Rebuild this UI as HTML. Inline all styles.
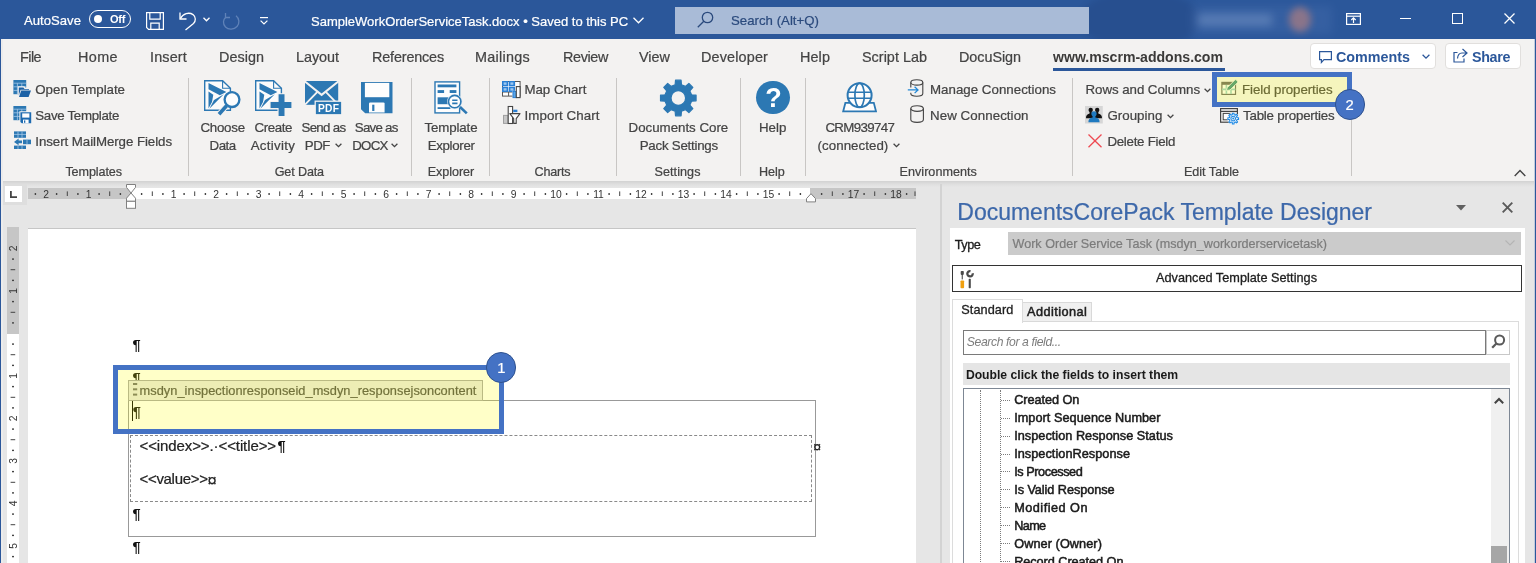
<!DOCTYPE html>
<html lang="en">
<head>
<meta charset="utf-8">
<title>Word - DocumentsCorePack Template Designer</title>
<style>
*{box-sizing:border-box;margin:0;padding:0}
html,body{width:1536px;height:563px;overflow:hidden;background:#e6e6e6}
body{font-family:"Liberation Sans",sans-serif;color:#444;position:relative}
#app{will-change:transform;position:absolute;left:0;top:0;width:1536px;height:563px;overflow:hidden;background:#e6e6e6}
.abs{position:absolute}
.t{position:absolute;white-space:nowrap;line-height:1;color:#444;-webkit-text-stroke-width:0.22px}
svg{position:absolute;overflow:visible}
#titlebar{position:absolute;left:0;top:0;width:1536px;height:39px;background:#2b579a}
#titlebar .t{color:#fff}
#ribbon{position:absolute;left:1px;top:39px;width:1534px;height:142px;background:#f3f2f1}
.sep{position:absolute;top:78px;width:1px;height:98px;background:#c8c6c4}
</style>
</head>
<body>
<div id="app">
<!-- ================= TITLE BAR ================= -->
<div id="titlebar">
<span class="t" style="left:24.0px;top:13.9px;font-size:13.1px;letter-spacing:0.027px;">AutoSave</span>
<div class="abs" style="left:89px;top:10px;width:42px;height:18px;border:1.3px solid #fff;border-radius:9px"></div>
<div class="abs" style="left:93.5px;top:15px;width:8px;height:8px;border-radius:50%;background:#fff"></div>
<span class="t" style="left:110.0px;top:14.0px;font-size:11px;letter-spacing:-0.297px;font-weight:700;-webkit-text-stroke-width:0;">Off</span>
<svg style="left:146px;top:12px" width="18" height="18" viewBox="0 0 18 18" fill="none" stroke="#fff" stroke-width="1.2"><path d="M0.6 0.6H17.4V17.4H2.6L0.6 15.4Z"/><path d="M3.8 0.6V7.2H14.2V0.6"/><path d="M4.8 17.4V11.2H13.2V17.4"/></svg>
<svg style="left:179px;top:11px" width="18" height="20" viewBox="0 0 18 20" fill="none" stroke="#fff" stroke-width="1.3"><path d="M1 1.5V8H7.5"/><path d="M1.3 7.6C4 2.5 10 0.8 14 3.6C17 6 17 10 14.5 12.5L6.5 19"/></svg>
<svg style="left:202.5px;top:17px" width="7" height="5" viewBox="0 0 7 5" fill="none" stroke="#fff" stroke-width="1.3"><path d="M0.5 0.8L3.5 3.8L6.5 0.8"/></svg>
<svg style="left:222px;top:12px" width="18" height="18" viewBox="0 0 18 18" fill="none" stroke="#5f82b8" stroke-width="1.3"><path d="M3.5 1V5.5H8"/><path d="M3.8 5.2C1 7.5 0.5 12 3.5 15C6.5 18 12 17.8 15 14.5C17.8 11.5 17.5 6.5 14 3.8"/></svg>
<svg style="left:259.5px;top:16.5px" width="8" height="8" viewBox="0 0 8 8" fill="none" stroke="#fff" stroke-width="1.2"><path d="M0 0.6H8"/><path d="M0.6 3.6L4 7L7.4 3.6"/></svg>
<span class="t" style="left:311.0px;top:14.7px;font-size:13px;">SampleWorkOrderServiceTask.docx • Saved to this PC</span>
<svg style="left:633px;top:17px" width="11" height="7" viewBox="0 0 11 7" fill="none" stroke="#fff" stroke-width="1.3"><path d="M0.5 0.8L5.5 5.8L10.5 0.8"/></svg>
<div class="abs" style="left:1080px;top:-10px;width:120px;height:60px;border-radius:50%;background:rgba(0,0,40,.085);filter:blur(3px)"></div>
<div class="abs" style="left:675px;top:7px;width:414px;height:26.5px;background:#a9bbd7"></div>
<svg style="left:697px;top:11px" width="17" height="17" viewBox="0 0 17 17" fill="none" stroke="#2b4a7d" stroke-width="1.3"><circle cx="10.5" cy="6.5" r="5.2"/><path d="M6.8 10.2L0.8 16.2"/></svg>
<span class="t" style="left:731.0px;top:13.5px;font-size:13.2px;letter-spacing:0.029px;color:#2b4a7d;">Search (Alt+Q)</span>
<div class="abs" style="left:1192px;top:6px;width:140px;height:28px;background:#4a70b0;filter:blur(5px);opacity:.35"></div>
<div class="abs" style="left:1198px;top:14px;width:74px;height:12px;background:#6f8fc2;filter:blur(4px);opacity:.6"></div>
<div class="abs" style="left:1289px;top:7px;width:22px;height:25px;border-radius:50%;background:#a07a84;filter:blur(3.5px);opacity:.8"></div>
<svg style="left:1346px;top:13px" width="15" height="12" viewBox="0 0 15 12" fill="none" stroke="#fff" stroke-width="1.2"><rect x="0.6" y="0.6" width="13.8" height="10.8"/><path d="M0.6 3.2H14.4"/><path d="M7.5 10V5M5.3 7L7.5 4.9L9.7 7"/></svg>
<div class="abs" style="left:1400px;top:18px;width:11px;height:1.3px;background:#fff"></div>
<div class="abs" style="left:1452px;top:13px;width:11px;height:11px;border:1.3px solid #fff"></div>
<svg style="left:1504px;top:13px" width="11" height="11" viewBox="0 0 11 11" fill="none" stroke="#fff" stroke-width="1.3"><path d="M0.5 0.5L10.5 10.5M10.5 0.5L0.5 10.5"/></svg>
</div>
<!-- ================= RIBBON ================= -->
<div id="ribbon"></div>
<div class="abs" style="left:1px;top:181px;width:1534px;height:6px;background:linear-gradient(#d2d2d2,#dedede 50%,#e6e6e6)"></div>
<span class="t" style="left:20.0px;top:50.0px;font-size:14.4px;letter-spacing:-0.551px;">File</span>
<span class="t" style="left:78.0px;top:50.0px;font-size:14.4px;letter-spacing:0.402px;">Home</span>
<span class="t" style="left:150.0px;top:50.0px;font-size:14.4px;letter-spacing:0.167px;">Insert</span>
<span class="t" style="left:219.0px;top:50.0px;font-size:14.4px;letter-spacing:0.034px;">Design</span>
<span class="t" style="left:296.0px;top:50.0px;font-size:14.4px;letter-spacing:-0.036px;">Layout</span>
<span class="t" style="left:372.0px;top:50.0px;font-size:14.4px;letter-spacing:-0.159px;">References</span>
<span class="t" style="left:475.0px;top:50.0px;font-size:14.4px;letter-spacing:0.275px;">Mailings</span>
<span class="t" style="left:563.0px;top:50.0px;font-size:14.4px;letter-spacing:-0.365px;">Review</span>
<span class="t" style="left:639.0px;top:50.0px;font-size:14.4px;letter-spacing:0.016px;">View</span>
<span class="t" style="left:701.0px;top:50.0px;font-size:14.4px;letter-spacing:0.155px;">Developer</span>
<span class="t" style="left:800.0px;top:50.0px;font-size:14.4px;letter-spacing:0.098px;">Help</span>
<span class="t" style="left:862.0px;top:50.0px;font-size:14.4px;letter-spacing:0.020px;">Script Lab</span>
<span class="t" style="left:959.0px;top:50.0px;font-size:14.4px;letter-spacing:-0.051px;">DocuSign</span>
<span class="t" style="left:1053.0px;top:50.3px;font-size:14.1px;letter-spacing:-0.011px;font-weight:700;color:#3b3a39;-webkit-text-stroke-width:0;">www.mscrm-addons.com</span>
<div class="abs" style="left:1053px;top:68px;width:172px;height:3px;background:#2b579a"></div>
<div class="abs" style="left:1310px;top:43px;width:126px;height:26px;background:#fff;border:1px solid #e1dfdd;border-radius:4px"></div>
<svg style="left:1319px;top:50.5px" width="13" height="13" viewBox="0 0 13 13" fill="none" stroke="#2b579a" stroke-width="1.2"><path d="M0.6 0.6H12.4V8.6H5L2.4 11.4V8.6H0.6Z"/></svg>
<span class="t" style="left:1336.0px;top:50.1px;font-size:14.3px;letter-spacing:0.014px;font-weight:700;color:#2b579a;-webkit-text-stroke-width:0;">Comments</span>
<svg style="left:1422px;top:53.5px" width="8" height="6" viewBox="0 0 8 6" fill="none" stroke="#2b579a" stroke-width="1.3"><path d="M0.6 0.8L4 4.2L7.4 0.8"/></svg>
<div class="abs" style="left:1445px;top:43px;width:76px;height:26px;background:#fff;border:1px solid #e1dfdd;border-radius:4px"></div>
<svg style="left:1453px;top:48px" width="15" height="15" viewBox="0 0 15 15" fill="none" stroke="#2b579a" stroke-width="1.2"><path d="M4.5 4.5H1V14H11V10.5"/><path d="M9.5 1L14 5L9.5 9M14 5H9C6.5 5 4.8 6.8 4.5 10.5"/></svg>
<span class="t" style="left:1472.0px;top:50.1px;font-size:14.3px;letter-spacing:-0.350px;font-weight:700;color:#2b579a;-webkit-text-stroke-width:0;">Share</span>
<div class="sep" style="left:188px"></div>
<div class="sep" style="left:411px"></div>
<div class="sep" style="left:489px"></div>
<div class="sep" style="left:616px"></div>
<div class="sep" style="left:740px"></div>
<div class="sep" style="left:805px"></div>
<div class="sep" style="left:1072px"></div>
<div class="sep" style="left:1351px"></div>
<svg style="left:13px;top:79px" width="18" height="18" viewBox="0 0 18 18"><rect x="0.4" y="1" width="12.8" height="14.2" fill="#2c78b3"/><path d="M0.4 4.2H13.2M0.4 7.8H13.2M0.4 11.4H13.2M4.4 4.2V15.2M8.8 4.2V15.2" stroke="#a4c8e8" stroke-width="0.8" fill="none"/><path d="M4.6 18.8L7.4 10.6H19L16.2 18.8Z" fill="#f3f2f1"/><path d="M5.6 8H11L12 9.4H16.6V11H8L5.6 17.6Z" fill="#f3f2f1" stroke="#f3f2f1" stroke-width="1.6"/><path d="M6 18L8.2 11.6H18L15.6 18Z" fill="#1d62a6"/><path d="M5.8 16.6V8.6H10.4L11.6 10H16V10.8H7.6Z" fill="#1d62a6"/></svg>
<span class="t" style="left:35.3px;top:83.1px;font-size:13.3px;letter-spacing:-0.018px;">Open Template</span>
<svg style="left:13px;top:105px" width="18" height="18" viewBox="0 0 18 18"><rect x="0.4" y="1" width="12.8" height="14.2" fill="#2c78b3"/><path d="M0.4 4.2H13.2M0.4 7.8H13.2M0.4 11.4H13.2M4.4 4.2V15.2M8.8 4.2V15.2" stroke="#a4c8e8" stroke-width="0.8" fill="none"/><path d="M6.4 6.2H19V19.2H8.2L6.4 17.4Z" fill="#f3f2f1"/><path d="M7.4 7.2H18.2V18.3H8.8L7.4 16.9Z" fill="#1d6ab0"/><rect x="9.2" y="8.4" width="7.2" height="4.2" fill="#fdfdfd"/><rect x="10" y="14.6" width="5.6" height="3.7" fill="#fdfdfd"/><rect x="11" y="15.4" width="1.3" height="2.4" fill="#1d6ab0"/></svg>
<span class="t" style="left:35.3px;top:109.3px;font-size:13.3px;letter-spacing:-0.309px;">Save Template</span>
<svg style="left:13px;top:131px" width="18" height="18" viewBox="0 0 18 18"><g fill="#2c78b3"><rect x="1" y="0.4" width="12" height="6.4"/><rect x="10" y="8.6" width="8" height="4.6"/><path d="M1 10.9L5.6 7.6V9.6H9V12.2H5.6V14.2Z"/><rect x="1" y="14.6" width="12" height="3.4"/></g><path d="M1 3.4H13M5 0.4V6.8M9 0.4V6.8M5 14.6V18M9 14.6V18M14 8.6V13.2" stroke="#a4c8e8" stroke-width="0.8" fill="none"/></svg>
<span class="t" style="left:35.3px;top:135.4px;font-size:13.3px;letter-spacing:-0.065px;">Insert MailMerge Fields</span>
<span class="t" style="left:65.4px;top:166.2px;font-size:12.6px;letter-spacing:-0.090px;">Templates</span>
<svg style="left:204px;top:79.5px" width="37" height="36" viewBox="0 0 37 36"><path d="M0.7 0.7H18.6L26.4 8.2V30.2H0.7Z" fill="#fbfbfb" stroke="#2c78b3" stroke-width="1.4"/><path d="M18.6 0.7V8.2H26.4" fill="none" stroke="#2c78b3" stroke-width="1.1"/><path d="M4.5 3.1L22.4 12.1L15.8 15.2L4.5 9.2Z M4.5 11.6L9.3 14.8L8 21.9L4.5 28.4Z M19.8 14.2L5.4 28.8L10 20Z" fill="#2c78b3"/><path d="M22.8 25.6L14.6 34.6" stroke="#f3f2f1" stroke-width="5.6" fill="none"/><path d="M22.6 25.8L15 34.2" stroke="#2c78b3" stroke-width="3.6" fill="none"/><circle cx="28" cy="19.6" r="7.4" fill="#fdfdfd" stroke="#2c78b3" stroke-width="2.3"/></svg>
<span class="t" style="left:200.5px;top:120.9px;font-size:13.3px;letter-spacing:-0.257px;">Choose</span>
<span class="t" style="left:209.6px;top:139.4px;font-size:13.3px;letter-spacing:-0.523px;">Data</span>
<svg style="left:254.5px;top:79.5px" width="37" height="36" viewBox="0 0 37 36"><path d="M0.7 0.7H18.6L26.4 8.2V30.2H0.7Z" fill="#fbfbfb" stroke="#2c78b3" stroke-width="1.4"/><path d="M18.6 0.7V8.2H26.4" fill="none" stroke="#2c78b3" stroke-width="1.1"/><path d="M4.5 3.1L22.4 12.1L15.8 15.2L4.5 9.2Z M4.5 11.6L9.3 14.8L8 21.9L4.5 28.4Z M19.8 14.2L5.4 28.8L10 20Z" fill="#2c78b3"/><path d="M22.5 13.2H30.5V21H37.4V29H30.5V37H22.5V29H14.6V21H22.5Z" fill="#f3f2f1"/><path d="M23.6 14.2H29.5V22H36.4V28H29.5V36H23.6V28H15.6V22H23.6Z" fill="#2c78b3"/></svg>
<span class="t" style="left:254.6px;top:120.9px;font-size:13.3px;letter-spacing:-0.420px;">Create</span>
<span class="t" style="left:250.7px;top:139.4px;font-size:13.3px;letter-spacing:0.297px;">Activity</span>
<svg style="left:305.4px;top:80.8px" width="37" height="34" viewBox="0 0 37 34"><rect x="0" y="0" width="33.2" height="23.8" fill="#2c78b3"/><path d="M-0.4 0.2L16.6 13.8L33.6 0.2" fill="none" stroke="#f3f2f1" stroke-width="2.1"/><path d="M0 23.6L12.4 10.8M33.2 23.6L20.8 10.8" fill="none" stroke="#f3f2f1" stroke-width="1.9"/><rect x="10.2" y="20.2" width="26.6" height="13.6" fill="#2c78b3" stroke="#f3f2f1" stroke-width="1.3"/><text x="23.6" y="30.8" font-family="Liberation Sans, sans-serif" font-size="10.2" font-weight="700" fill="#fff" text-anchor="middle" letter-spacing="0.3">PDF</text></svg>
<span class="t" style="left:301.5px;top:120.9px;font-size:13.3px;letter-spacing:-0.700px;">Send as</span>
<span class="t" style="left:304.8px;top:139.4px;font-size:13.3px;letter-spacing:-0.536px;">PDF</span>
<svg style="left:335px;top:143px" width="7" height="5" viewBox="0 0 7 5" fill="none" stroke="#444" stroke-width="1.3"><path d="M0.6 0.8L3.5 3.7L6.4 0.8"/></svg>
<svg style="left:360.7px;top:81.8px" width="32" height="32" viewBox="0 0 32 32"><path d="M0 0H31.5V31.3H4.2L0 27.2Z" fill="#2c78b3"/><rect x="3.9" y="0.9" width="24.4" height="14.3" fill="#fdfdfd"/><path d="M8 30.4V21.6A1.2 1.2 0 0 1 9.2 20.4H22.4A1.2 1.2 0 0 1 23.6 21.6V30.4Z" fill="#fdfdfd"/><rect x="11.2" y="22.7" width="2.2" height="6.3" fill="#2c78b3"/></svg>
<span class="t" style="left:354.8px;top:120.9px;font-size:13.3px;letter-spacing:-0.750px;">Save as</span>
<span class="t" style="left:352.3px;top:139.4px;font-size:13.3px;letter-spacing:-0.805px;">DOCX</span>
<svg style="left:391.3px;top:143px" width="7" height="5" viewBox="0 0 7 5" fill="none" stroke="#444" stroke-width="1.3"><path d="M0.6 0.8L3.5 3.7L6.4 0.8"/></svg>
<span class="t" style="left:274.7px;top:166.2px;font-size:12.6px;letter-spacing:-0.138px;">Get Data</span>
<svg style="left:433.6px;top:80.8px" width="34" height="33" viewBox="0 0 34 33"><rect x="1" y="0.9" width="24.6" height="31" fill="#fdfdfd" stroke="#2c78b3" stroke-width="1.4"/><g fill="#2c78b3"><rect x="3.6" y="3.5" width="18.8" height="2.8"/><rect x="3.6" y="9.1" width="6.5" height="2.9"/><rect x="15.7" y="9.1" width="6.7" height="2.9"/><rect x="3.6" y="16.3" width="11" height="6.9"/><rect x="3.6" y="26.2" width="12.8" height="1.8"/></g><path d="M25 25L32.8 32.4" stroke="#2c78b3" stroke-width="2.6"/><circle cx="20.7" cy="20.6" r="7.6" fill="#d9e6f2"/><circle cx="20.7" cy="20.6" r="6.2" fill="#fdfdfd" stroke="#2c78b3" stroke-width="1.6"/><path d="M18.2 19.3H23.5M18.2 22.4H23.5" stroke="#2c78b3" stroke-width="1.6"/></svg>
<span class="t" style="left:424.4px;top:120.9px;font-size:13.3px;letter-spacing:-0.109px;">Template</span>
<span class="t" style="left:427.7px;top:139.4px;font-size:13.3px;letter-spacing:-0.327px;">Explorer</span>
<span class="t" style="left:427.7px;top:166.2px;font-size:12.6px;letter-spacing:-0.051px;">Explorer</span>
<svg style="left:501.9px;top:80.8px" width="19" height="17" viewBox="0 0 19 17"><rect x="0.5" y="0.5" width="17.6" height="14.6" fill="#fdfdfd" stroke="#555" stroke-width="1"/><path d="M0.5 11H13M6.6 11V15M12.6 0.5V5" stroke="#555" fill="none"/><g fill="#2a7fd4"><rect x="0" y="0" width="6.2" height="5.2"/><rect x="6.8" y="0" width="6.2" height="5.2"/><rect x="0" y="5.8" width="6.2" height="5.2"/><rect x="6.8" y="5.8" width="6.2" height="5.2"/></g><g fill="#9cc7f0"><rect x="1.6" y="1.4" width="3" height="2.4"/><rect x="8.4" y="1.4" width="3" height="2.4"/><rect x="1.6" y="7.2" width="3" height="2.4"/><rect x="8.4" y="7.2" width="3" height="2.4"/></g><rect x="10.4" y="9.8" width="4" height="7" fill="#f3f2f1"/><rect x="11" y="10.4" width="3.2" height="6.2" fill="#5aa7ea" stroke="#2a7fd4" stroke-width="1"/><rect x="14.3" y="5.6" width="3.8" height="11" fill="#fdfdfd" stroke="#444" stroke-width="1.1"/></svg>
<span class="t" style="left:524.4px;top:83.1px;font-size:13.3px;">Map Chart</span>
<svg style="left:503.3px;top:105.6px" width="18" height="18" viewBox="0 0 18 18"><rect x="0.5" y="9.4" width="4.4" height="8" fill="#c8c8c8" stroke="#a0a0a0"/><rect x="5.2" y="0.5" width="4.4" height="17" fill="#fdfdfd" stroke="#444" stroke-width="1.1"/><rect x="10.2" y="3.7" width="4.2" height="2.4" fill="#2a7fd4"/><path d="M6.8 7.6H17L13.2 12.6V17.4H10.7V12.6Z" fill="#fdfdfd" stroke="#444" stroke-width="1.1" stroke-linejoin="round"/></svg>
<span class="t" style="left:524.4px;top:109.3px;font-size:13.3px;letter-spacing:0.108px;">Import Chart</span>
<span class="t" style="left:534.6px;top:166.2px;font-size:12.6px;letter-spacing:-0.232px;">Charts</span>
<svg style="left:660.4px;top:79.6px" width="37" height="36" viewBox="0 0 37 36"><path d="M15.13 4.77 L15.52 0.22 L21.08 0.22 L21.47 4.77 L25.41 6.41 L28.91 3.46 L32.84 7.39 L29.89 10.89 L31.53 14.83 L36.08 15.22 L36.08 20.78 L31.53 21.17 L29.89 25.11 L32.84 28.61 L28.91 32.54 L25.41 29.59 L21.47 31.23 L21.08 35.78 L15.52 35.78 L15.13 31.23 L11.19 29.59 L7.69 32.54 L3.76 28.61 L6.71 25.11 L5.07 21.17 L0.52 20.78 L0.52 15.22 L5.07 14.83 L6.71 10.89 L3.76 7.39 L7.69 3.46 L11.19 6.41Z M11.00 18.00 a7.3 7.3 0 1 0 14.6 0 a7.3 7.3 0 1 0 -14.6 0Z" fill="#2c78b3" fill-rule="evenodd" stroke="#2c78b3" stroke-width="1.2" stroke-linejoin="round"/></svg>
<span class="t" style="left:628.6px;top:120.9px;font-size:13.3px;letter-spacing:-0.012px;">Documents Core</span>
<span class="t" style="left:639.7px;top:139.4px;font-size:13.3px;letter-spacing:-0.239px;">Pack Settings</span>
<span class="t" style="left:654.5px;top:166.2px;font-size:12.6px;letter-spacing:0.061px;">Settings</span>
<div class="abs" style="left:756.2px;top:80.6px;width:33.6px;height:33.6px;border-radius:50%;background:#2c78b3"></div>
<span class="t" style="left:765.3px;top:85.0px;font-size:27px;font-weight:700;color:#fff;-webkit-text-stroke-width:0;">?</span>
<span class="t" style="left:758.9px;top:120.9px;font-size:13.3px;letter-spacing:0.035px;">Help</span>
<span class="t" style="left:758.9px;top:166.2px;font-size:12.6px;letter-spacing:0.023px;">Help</span>
<svg style="left:842px;top:82px" width="35" height="31" viewBox="0 0 35 31" fill="none" stroke="#2c78b3" stroke-width="1.8"><path d="M3.4 20.8L1.2 29.4H34L31.8 20.8Z" fill="#fdfdfd"/><circle cx="17.6" cy="13.2" r="12" fill="#fdfdfd" stroke-width="2"/><ellipse cx="17.6" cy="13.2" rx="4.7" ry="12" stroke-width="1.7"/><path d="M6.2 10.2H29M6.2 16.2H29" stroke-width="1.6"/></svg>
<span class="t" style="left:825.4px;top:120.9px;font-size:13.3px;letter-spacing:-0.651px;">CRM939747</span>
<span class="t" style="left:817.6px;top:139.4px;font-size:13.3px;letter-spacing:0.044px;">(connected)</span>
<svg style="left:893px;top:143px" width="7" height="5" viewBox="0 0 7 5" fill="none" stroke="#444" stroke-width="1.3"><path d="M0.6 0.8L3.5 3.7L6.4 0.8"/></svg>
<svg style="left:908.4px;top:79.4px" width="16" height="18" viewBox="0 0 16 18" fill="none" stroke="#444" stroke-width="1.1"><path d="M2.8 3.4V8.6M2.8 13.8V14.6A6 2.7 0 0 0 14.8 14.6V3.4"/><ellipse cx="8.8" cy="3.4" rx="6" ry="2.7"/><path d="M-0.2 10.9H9.8M6.6 7.7L10 10.9L6.6 14.1" stroke="#2388d6" stroke-width="1.3"/></svg>
<span class="t" style="left:930.0px;top:83.1px;font-size:13.3px;letter-spacing:0.018px;">Manage Connections</span>
<svg style="left:909.6px;top:105.4px" width="15" height="18" viewBox="0 0 15 18" fill="none" stroke="#444" stroke-width="1.1"><path d="M0.8 3.6V14.6A6.3 2.8 0 0 0 13.4 14.6V3.6"/><ellipse cx="7.1" cy="3.6" rx="6.3" ry="2.8"/></svg>
<span class="t" style="left:930.0px;top:109.3px;font-size:13.3px;letter-spacing:0.073px;">New Connection</span>
<span class="t" style="left:899.6px;top:166.2px;font-size:12.6px;letter-spacing:0.017px;">Environments</span>
<span class="t" style="left:1085.5px;top:83.1px;font-size:13.3px;letter-spacing:-0.050px;">Rows and Columns</span>
<svg style="left:1204px;top:87.5px" width="7" height="5" viewBox="0 0 7 5" fill="none" stroke="#444" stroke-width="1.3"><path d="M0.6 0.8L3.5 3.7L6.4 0.8"/></svg>
<svg style="left:1085.4px;top:105.6px" width="18" height="18" viewBox="0 0 18 18"><rect width="17.8" height="17.5" fill="#d6d6d6"/><g fill="#111"><circle cx="5.7" cy="3.9" r="2.2"/><circle cx="12.2" cy="3.9" r="2.2"/><path d="M4.6 5.6H6.8V7.6C8.4 8 8.6 9 8.9 9.6C9.2 9 9.4 8 11.1 7.6V5.6H13.3V7.6C16.2 8.4 17 10 17 12.2H1C1 10 1.8 8.4 4.6 7.6Z"/></g><g fill="#1f7ac0"><circle cx="9" cy="7.8" r="2.6"/><path d="M7.6 9.6H10.4V11.6C13.4 12.2 14.6 13.6 14.6 16.2H3.4C3.4 13.6 4.6 12.2 7.6 11.6Z"/></g></svg>
<span class="t" style="left:1107.4px;top:109.3px;font-size:13.3px;letter-spacing:0.037px;">Grouping</span>
<svg style="left:1166.6px;top:114px" width="7" height="5" viewBox="0 0 7 5" fill="none" stroke="#444" stroke-width="1.3"><path d="M0.6 0.8L3.5 3.7L6.4 0.8"/></svg>
<svg style="left:1087.6px;top:133.8px" width="14" height="14" viewBox="0 0 14 14" fill="none" stroke="#ee4a52" stroke-width="1.3"><path d="M0.5 0.5L13.5 13.2M13.5 0.5L0.5 13.2"/></svg>
<span class="t" style="left:1107.4px;top:135.4px;font-size:13.3px;letter-spacing:-0.263px;">Delete Field</span>
<svg style="left:1221px;top:79.4px" width="18" height="17" viewBox="0 0 18 17"><rect x="0.9" y="3.4" width="13.6" height="12" fill="#fdfdfd" stroke="#666" stroke-width="1.2"/><rect x="0.9" y="3.4" width="13.6" height="2.4" fill="#666"/><path d="M1 10.4H14.4M5.4 6V15M10 6V15" stroke="#9ad0c8" stroke-width="1.6"/><path d="M5.4 11.4L6.4 8.4L13.6 1.2A1.3 1.3 0 0 1 15.6 1.2L16.4 2A1.3 1.3 0 0 1 16.4 3.8L9 11Z" fill="#3f8f86" stroke="#fdfdfd" stroke-width="0.8"/></svg>
<span class="t" style="left:1242.0px;top:83.1px;font-size:13.3px;letter-spacing:-0.072px;">Field properties</span>
<svg style="left:1220px;top:107.5px" width="19" height="17" viewBox="0 0 19 17"><rect x="0.6" y="0.6" width="16.8" height="13.6" fill="none" stroke="#444" stroke-width="1.2"/><path d="M0.6 3.4H17.4" stroke="#444" stroke-width="1.2"/><rect x="3.2" y="5.4" width="12" height="6.4" fill="#fdfdfd" stroke="#444" stroke-width="1"/><circle cx="13.2" cy="10.6" r="6" fill="#f3f2f1"/><path d="M12.29 6.81 L12.37 5.26 L14.03 5.26 L14.11 6.81 L15.24 7.28 L16.38 6.24 L17.56 7.42 L16.52 8.56 L16.99 9.69 L18.54 9.77 L18.54 11.43 L16.99 11.51 L16.52 12.64 L17.56 13.78 L16.38 14.96 L15.24 13.92 L14.11 14.39 L14.03 15.94 L12.37 15.94 L12.29 14.39 L11.16 13.92 L10.02 14.96 L8.84 13.78 L9.88 12.64 L9.41 11.51 L7.86 11.43 L7.86 9.77 L9.41 9.69 L9.88 8.56 L8.84 7.42 L10.02 6.24 L11.16 7.28Z M10.90 10.60 a2.3 2.3 0 1 0 4.6 0 a2.3 2.3 0 1 0 -4.6 0Z" fill="#fdfdfd" fill-rule="evenodd" stroke="#1e8ae6" stroke-width="1.1" stroke-linejoin="round"/><circle cx="13.2" cy="10.6" r="1" fill="#1e8ae6"/></svg>
<span class="t" style="left:1243.0px;top:109.3px;font-size:13.3px;letter-spacing:-0.195px;">Table properties</span>
<span class="t" style="left:1183.9px;top:166.2px;font-size:12.6px;">Edit Table</span>
<div class="abs" style="left:1212px;top:72px;width:140px;height:35px;border:5px solid #4472c4;background:rgba(255,255,0,.215)"></div>
<div class="abs" style="left:1334.6px;top:89.4px;width:30.6px;height:30.6px;border-radius:50%;background:#4472c4;border:1.5px solid #2f528f"></div>
<span class="t" style="left:1345.6px;top:97.5px;font-size:14.8px;color:#fff;">2</span>
<svg style="left:1514px;top:169px" width="12" height="8" viewBox="0 0 12 8" fill="none" stroke="#444" stroke-width="1.4"><path d="M0.7 7L6 1.5L11.3 7"/></svg>
<!-- ================= DOCUMENT AREA ================= -->
<div class="abs" style="left:3px;top:184px;width:24px;height:21px;background:#dedede"></div>
<div class="abs" style="left:5px;top:186px;width:17px;height:16px;background:#fff"></div>
<svg style="left:10px;top:191px" width="7" height="7" viewBox="0 0 7 7" fill="none" stroke="#444" stroke-width="1.8"><path d="M0.9 0V6.1H7"/></svg>
<div class="abs" style="left:28px;top:188px;width:888px;height:11px;background:#fff"></div>
<div class="abs" style="left:28px;top:188px;width:103px;height:11px;background:#c6c6c6"></div>
<div class="abs" style="left:810px;top:188px;width:106px;height:11px;background:#c6c6c6"></div>
<svg style="left:0;top:188px" width="920" height="11" viewBox="0 0 920 11" fill="#444"><rect x="34.7" y="5" width="1.4" height="2"/><text x="46.0" y="9.6" font-family="Liberation Sans, sans-serif" font-size="10.3" text-anchor="middle" fill="#333">2</text><rect x="55.9" y="5" width="1.4" height="2"/><rect x="66.8" y="3.4" width="1" height="4.6"/><rect x="77.2" y="5" width="1.4" height="2"/><text x="88.5" y="9.6" font-family="Liberation Sans, sans-serif" font-size="10.3" text-anchor="middle" fill="#333">1</text><rect x="98.4" y="5" width="1.4" height="2"/><rect x="109.2" y="3.4" width="1" height="4.6"/><rect x="119.7" y="5" width="1.4" height="2"/><rect x="140.9" y="5" width="1.4" height="2"/><rect x="151.8" y="3.4" width="1" height="4.6"/><rect x="162.2" y="5" width="1.4" height="2"/><text x="173.5" y="9.6" font-family="Liberation Sans, sans-serif" font-size="10.3" text-anchor="middle" fill="#333">1</text><rect x="183.4" y="5" width="1.4" height="2"/><rect x="194.2" y="3.4" width="1" height="4.6"/><rect x="204.7" y="5" width="1.4" height="2"/><text x="216.0" y="9.6" font-family="Liberation Sans, sans-serif" font-size="10.3" text-anchor="middle" fill="#333">2</text><rect x="225.9" y="5" width="1.4" height="2"/><rect x="236.8" y="3.4" width="1" height="4.6"/><rect x="247.2" y="5" width="1.4" height="2"/><text x="258.5" y="9.6" font-family="Liberation Sans, sans-serif" font-size="10.3" text-anchor="middle" fill="#333">3</text><rect x="268.4" y="5" width="1.4" height="2"/><rect x="279.2" y="3.4" width="1" height="4.6"/><rect x="289.7" y="5" width="1.4" height="2"/><text x="301.0" y="9.6" font-family="Liberation Sans, sans-serif" font-size="10.3" text-anchor="middle" fill="#333">4</text><rect x="310.9" y="5" width="1.4" height="2"/><rect x="321.8" y="3.4" width="1" height="4.6"/><rect x="332.2" y="5" width="1.4" height="2"/><text x="343.5" y="9.6" font-family="Liberation Sans, sans-serif" font-size="10.3" text-anchor="middle" fill="#333">5</text><rect x="353.4" y="5" width="1.4" height="2"/><rect x="364.2" y="3.4" width="1" height="4.6"/><rect x="374.7" y="5" width="1.4" height="2"/><text x="386.0" y="9.6" font-family="Liberation Sans, sans-serif" font-size="10.3" text-anchor="middle" fill="#333">6</text><rect x="395.9" y="5" width="1.4" height="2"/><rect x="406.8" y="3.4" width="1" height="4.6"/><rect x="417.2" y="5" width="1.4" height="2"/><text x="428.5" y="9.6" font-family="Liberation Sans, sans-serif" font-size="10.3" text-anchor="middle" fill="#333">7</text><rect x="438.4" y="5" width="1.4" height="2"/><rect x="449.2" y="3.4" width="1" height="4.6"/><rect x="459.7" y="5" width="1.4" height="2"/><text x="471.0" y="9.6" font-family="Liberation Sans, sans-serif" font-size="10.3" text-anchor="middle" fill="#333">8</text><rect x="480.9" y="5" width="1.4" height="2"/><rect x="491.8" y="3.4" width="1" height="4.6"/><rect x="502.2" y="5" width="1.4" height="2"/><text x="513.5" y="9.6" font-family="Liberation Sans, sans-serif" font-size="10.3" text-anchor="middle" fill="#333">9</text><rect x="523.4" y="5" width="1.4" height="2"/><rect x="534.2" y="3.4" width="1" height="4.6"/><rect x="544.7" y="5" width="1.4" height="2"/><text x="556.0" y="9.6" font-family="Liberation Sans, sans-serif" font-size="10.3" text-anchor="middle" fill="#333">10</text><rect x="565.9" y="5" width="1.4" height="2"/><rect x="576.8" y="3.4" width="1" height="4.6"/><rect x="587.2" y="5" width="1.4" height="2"/><text x="598.5" y="9.6" font-family="Liberation Sans, sans-serif" font-size="10.3" text-anchor="middle" fill="#333">11</text><rect x="608.4" y="5" width="1.4" height="2"/><rect x="619.2" y="3.4" width="1" height="4.6"/><rect x="629.7" y="5" width="1.4" height="2"/><text x="641.0" y="9.6" font-family="Liberation Sans, sans-serif" font-size="10.3" text-anchor="middle" fill="#333">12</text><rect x="650.9" y="5" width="1.4" height="2"/><rect x="661.8" y="3.4" width="1" height="4.6"/><rect x="672.2" y="5" width="1.4" height="2"/><text x="683.5" y="9.6" font-family="Liberation Sans, sans-serif" font-size="10.3" text-anchor="middle" fill="#333">13</text><rect x="693.4" y="5" width="1.4" height="2"/><rect x="704.2" y="3.4" width="1" height="4.6"/><rect x="714.7" y="5" width="1.4" height="2"/><text x="726.0" y="9.6" font-family="Liberation Sans, sans-serif" font-size="10.3" text-anchor="middle" fill="#333">14</text><rect x="735.9" y="5" width="1.4" height="2"/><rect x="746.8" y="3.4" width="1" height="4.6"/><rect x="757.2" y="5" width="1.4" height="2"/><text x="768.5" y="9.6" font-family="Liberation Sans, sans-serif" font-size="10.3" text-anchor="middle" fill="#333">15</text><rect x="778.4" y="5" width="1.4" height="2"/><rect x="789.2" y="3.4" width="1" height="4.6"/><rect x="799.7" y="5" width="1.4" height="2"/><rect x="820.9" y="5" width="1.4" height="2"/><rect x="831.8" y="3.4" width="1" height="4.6"/><rect x="842.2" y="5" width="1.4" height="2"/><text x="853.5" y="9.6" font-family="Liberation Sans, sans-serif" font-size="10.3" text-anchor="middle" fill="#333">17</text><rect x="863.4" y="5" width="1.4" height="2"/><rect x="874.2" y="3.4" width="1" height="4.6"/><rect x="884.7" y="5" width="1.4" height="2"/><text x="896.0" y="9.6" font-family="Liberation Sans, sans-serif" font-size="10.3" text-anchor="middle" fill="#333">18</text><rect x="905.9" y="5" width="1.4" height="2"/><rect x="914.5" y="3.4" width="1" height="4.6"/></svg>
<svg style="left:126px;top:184px" width="11" height="25" viewBox="0 0 11 25" fill="#fff" stroke="#808080" stroke-width="1"><path d="M0.5 0.5H9.5V3.4L5 9L0.5 3.4Z"/><path d="M5 9L9.5 14.2V17.3H0.5V14.2Z"/><rect x="0.5" y="17.3" width="9" height="7"/></svg>
<svg style="left:805.5px;top:192.6px" width="11" height="10" viewBox="0 0 11 10" fill="#fff" stroke="#808080" stroke-width="1"><path d="M0.5 8.9V5.6L5 0.7L9.5 5.6V8.9Z"/></svg>
<div class="abs" style="left:7px;top:227px;width:12px;height:340px;background:#fff"></div>
<div class="abs" style="left:7px;top:227px;width:12px;height:107px;background:#c6c6c6"></div>
<svg style="left:7px;top:0" width="12" height="563" viewBox="0 0 12 563" fill="#444"><text transform="translate(9.6 248.5) rotate(-90)" font-family="Liberation Sans, sans-serif" font-size="10.3" text-anchor="middle" fill="#333">2</text><rect x="5" y="258.4" width="2" height="1.4"/><rect x="3.6" y="269.2" width="4.6" height="1"/><rect x="5" y="279.7" width="2" height="1.4"/><text transform="translate(9.6 291.0) rotate(-90)" font-family="Liberation Sans, sans-serif" font-size="10.3" text-anchor="middle" fill="#333">1</text><rect x="5" y="300.9" width="2" height="1.4"/><rect x="3.6" y="311.8" width="4.6" height="1"/><rect x="5" y="322.2" width="2" height="1.4"/><rect x="5" y="343.4" width="2" height="1.4"/><rect x="3.6" y="354.2" width="4.6" height="1"/><rect x="5" y="364.7" width="2" height="1.4"/><text transform="translate(9.6 376.0) rotate(-90)" font-family="Liberation Sans, sans-serif" font-size="10.3" text-anchor="middle" fill="#333">1</text><rect x="5" y="385.9" width="2" height="1.4"/><rect x="3.6" y="396.8" width="4.6" height="1"/><rect x="5" y="407.2" width="2" height="1.4"/><text transform="translate(9.6 418.5) rotate(-90)" font-family="Liberation Sans, sans-serif" font-size="10.3" text-anchor="middle" fill="#333">2</text><rect x="5" y="428.4" width="2" height="1.4"/><rect x="3.6" y="439.2" width="4.6" height="1"/><rect x="5" y="449.7" width="2" height="1.4"/><text transform="translate(9.6 461.0) rotate(-90)" font-family="Liberation Sans, sans-serif" font-size="10.3" text-anchor="middle" fill="#333">3</text><rect x="5" y="470.9" width="2" height="1.4"/><rect x="3.6" y="481.8" width="4.6" height="1"/><rect x="5" y="492.2" width="2" height="1.4"/><text transform="translate(9.6 503.5) rotate(-90)" font-family="Liberation Sans, sans-serif" font-size="10.3" text-anchor="middle" fill="#333">4</text><rect x="5" y="513.4" width="2" height="1.4"/><rect x="3.6" y="524.2" width="4.6" height="1"/><rect x="5" y="534.7" width="2" height="1.4"/><text transform="translate(9.6 546.0) rotate(-90)" font-family="Liberation Sans, sans-serif" font-size="10.3" text-anchor="middle" fill="#333">5</text><rect x="5" y="555.9" width="2" height="1.4"/></svg>
<div class="abs" style="left:28px;top:228px;width:888px;height:340px;background:#fff;border-top:1px solid #c6c6c6"></div>
<span class="t" style="left:132.4px;top:338.3px;font-size:14.6px;font-weight:700;color:#111;-webkit-text-stroke-width:0;">¶</span>
<span class="t" style="left:132.4px;top:370.8px;font-size:14.6px;font-weight:700;color:#111;-webkit-text-stroke-width:0;">¶</span>
<div class="abs" style="left:128px;top:400px;width:688px;height:137px;border:1px solid #999"></div>
<div class="abs" style="left:130px;top:435px;width:682px;height:67px;border:1px dashed #8a8a8a"></div>
<div class="abs" style="left:128px;top:380px;width:355px;height:21px;background:#e9e9e6;border:1px solid #a8a8a8"></div>
<svg style="left:132.8px;top:383.4px" width="5" height="14" viewBox="0 0 5 14" fill="#6e6e6e"><rect x="0" y="0" width="4.2" height="2"/><rect x="0" y="5.3" width="4.2" height="2"/><rect x="0" y="10.6" width="4.2" height="2"/></svg>
<span class="t" style="left:139.6px;top:384.9px;font-size:12.8px;letter-spacing:0.033px;color:#4c4c4c;">msdyn_inspectionresponseid_msdyn_responsejsoncontent</span>
<span class="t" style="left:132.8px;top:404.6px;font-size:14.6px;font-weight:700;color:#111;-webkit-text-stroke-width:0;">¶</span>
<div class="abs" style="left:131.5px;top:401px;width:1.5px;height:20px;background:#000"></div>
<span class="t" style="left:139.5px;top:438.0px;font-size:15px;letter-spacing:-0.098px;color:#222;">&lt;&lt;index&gt;&gt;.·&lt;&lt;title&gt;&gt;</span>
<span class="t" style="left:277.6px;top:439.1px;font-size:14.6px;font-weight:700;color:#111;-webkit-text-stroke-width:0;">¶</span>
<span class="t" style="left:139.5px;top:471.4px;font-size:15px;letter-spacing:-0.312px;color:#222;">&lt;&lt;value&gt;&gt;</span>
<span class="t" style="left:207.4px;top:471.9px;font-size:16.5px;color:#222;">¤</span>
<span class="t" style="left:813.2px;top:440.3px;font-size:14px;color:#222;">¤</span>
<span class="t" style="left:132.4px;top:506.8px;font-size:14.6px;font-weight:700;color:#111;-webkit-text-stroke-width:0;">¶</span>
<span class="t" style="left:132.4px;top:540.1px;font-size:14.6px;font-weight:700;color:#111;-webkit-text-stroke-width:0;">¶</span>
<div class="abs" style="left:113px;top:365px;width:390.5px;height:69px;border:5px solid #4472c4;background:rgba(255,255,0,.215)"></div>
<div class="abs" style="left:485.8px;top:352.2px;width:30.6px;height:30.6px;border-radius:50%;background:#4472c4;border:1.5px solid #2f528f"></div>
<span class="t" style="left:497.2px;top:360.5px;font-size:14.8px;color:#fff;">1</span>
<div class="abs" style="left:940px;top:184px;width:2px;height:380px;background:#d3d3d3"></div>
<!-- ================= TASK PANE ================= -->
<span class="t" style="left:957.3px;top:200.8px;font-size:23px;letter-spacing:-0.010px;color:#3d68aa;">DocumentsCorePack Template Designer</span>
<svg style="left:1456px;top:205px" width="10" height="6" viewBox="0 0 10 6" fill="#606060"><path d="M0 0H10L5 5.6Z"/></svg>
<svg style="left:1502px;top:202px" width="11" height="11" viewBox="0 0 11 11" fill="none" stroke="#5a5a5a" stroke-width="1.9"><path d="M0.7 0.7L10.3 10.3M10.3 0.7L0.7 10.3"/></svg>
<div class="abs" style="left:949.5px;top:228px;width:575px;height:340px;background:#fff"></div>
<span class="t" style="left:954.7px;top:238.9px;font-size:12.7px;letter-spacing:-0.429px;color:#1e1e1e;-webkit-text-stroke-width:0.3px;">Type</span>
<div class="abs" style="left:1008px;top:231.5px;width:513px;height:23px;background:#cbcbcb"></div>
<span class="t" style="left:1012.5px;top:238.4px;font-size:12.6px;color:#7c7c7c;">Work Order Service Task (msdyn_workorderservicetask)</span>
<svg style="left:1505px;top:240px" width="10" height="6" viewBox="0 0 10 6" fill="none" stroke="#b4b4b4" stroke-width="1.1"><path d="M0.5 0.5L5 5L9.5 0.5"/></svg>
<div class="abs" style="left:952px;top:265px;width:569.5px;height:27px;background:#fff;border:1.2px solid #333"></div>
<svg style="left:960px;top:270px" width="14" height="19" viewBox="0 0 14 19"><rect x="0.7" y="0.9" width="3.1" height="4" rx="0.8" fill="#4a4a4a"/><rect x="1.7" y="4.6" width="1.1" height="4.8" fill="#4a4a4a"/><rect x="0.5" y="10.4" width="3.6" height="7.8" rx="0.9" fill="#f0a010"/><path d="M12.7 3.3A2.7 2.7 0 1 1 10.5 1.1" fill="none" stroke="#4a4a4a" stroke-width="2.3"/><rect x="8.7" y="8.8" width="2.1" height="9.4" rx="0.6" fill="#4a4a4a"/></svg>
<span class="t" style="left:1156.0px;top:272.2px;font-size:12.7px;letter-spacing:0.016px;color:#1e1e1e;-webkit-text-stroke-width:0.3px;">Advanced Template Settings</span>
<div class="abs" style="left:952px;top:321px;width:567px;height:250px;background:#fff;border:1px solid #dcdcdc"></div>
<div class="abs" style="left:1021px;top:301.5px;width:71px;height:20.5px;background:#f0f0f0;border:1px solid #d9d9d9"></div>
<div class="abs" style="left:952px;top:299px;width:70.5px;height:24px;background:#fff;border:1px solid #dcdcdc;border-bottom:none"></div>
<span class="t" style="left:961.3px;top:304.1px;font-size:12.7px;letter-spacing:0.062px;color:#1e1e1e;-webkit-text-stroke-width:0.3px;">Standard</span>
<span class="t" style="left:1027.0px;top:306.3px;font-size:12.7px;letter-spacing:0.457px;color:#1e1e1e;-webkit-text-stroke-width:0.3px;-webkit-text-stroke:0.5px #1e1e1e;">Additional</span>
<div class="abs" style="left:962.5px;top:330px;width:523.5px;height:24.5px;background:#fff;border:1px solid #7a7a7a"></div>
<span class="t" style="left:966.8px;top:335.8px;font-size:12.2px;letter-spacing:-0.395px;font-style:italic;color:#7d7d7d;-webkit-text-stroke-width:0;">Search for a field...</span>
<div class="abs" style="left:1485.5px;top:330px;width:24.5px;height:24.5px;background:#fff;border:1px solid #c8c8c8"></div>
<svg style="left:1491px;top:334px" width="15" height="15" viewBox="0 0 15 15" fill="none" stroke="#5a5a5a" stroke-width="2"><circle cx="8.6" cy="6" r="4.5"/><path d="M5.4 9.4L1.2 13.8" stroke-width="2.2"/></svg>
<div class="abs" style="left:962.5px;top:363.3px;width:547.5px;height:21.5px;background:#e5e5e5"></div>
<span class="t" style="left:965.9px;top:368.8px;font-size:12.2px;letter-spacing:-0.009px;font-weight:700;color:#1a1a1a;-webkit-text-stroke-width:0;">Double click the fields to insert them</span>
<div class="abs" style="left:962.5px;top:388.3px;width:547.5px;height:190px;background:#fff;border:1px solid #7d8794"></div>
<div class="abs" style="left:1490.5px;top:389.3px;width:18.5px;height:180px;background:#f0f0f0"></div>
<svg style="left:1493.6px;top:397px" width="10" height="7" viewBox="0 0 10 7" fill="none" stroke="#444" stroke-width="2"><path d="M0.8 6.2L5 2L9.2 6.2"/></svg>
<div class="abs" style="left:1490.5px;top:545.7px;width:16.5px;height:20px;background:#a6a6a6"></div>
<div class="abs" style="left:979.5px;top:390px;width:0;height:180px;border-left:1px dotted #7c7c7c"></div>
<div class="abs" style="left:1000px;top:390px;width:0;height:180px;border-left:1px dotted #7c7c7c"></div>
<div class="abs" style="left:1001px;top:399.6px;width:9px;height:0;border-top:1px dotted #7c7c7c"></div>
<span class="t" style="left:1014.2px;top:394.1px;font-size:12.7px;letter-spacing:-0.039px;color:#1a1a1a;-webkit-text-stroke:0.5px #1a1a1a;">Created On</span>
<div class="abs" style="left:1001px;top:417.6px;width:9px;height:0;border-top:1px dotted #7c7c7c"></div>
<span class="t" style="left:1014.2px;top:412.1px;font-size:12.7px;letter-spacing:0.046px;color:#1a1a1a;-webkit-text-stroke:0.5px #1a1a1a;">Import Sequence Number</span>
<div class="abs" style="left:1001px;top:435.5px;width:9px;height:0;border-top:1px dotted #7c7c7c"></div>
<span class="t" style="left:1014.2px;top:430.1px;font-size:12.7px;letter-spacing:0.031px;color:#1a1a1a;-webkit-text-stroke:0.5px #1a1a1a;">Inspection Response Status</span>
<div class="abs" style="left:1001px;top:453.5px;width:9px;height:0;border-top:1px dotted #7c7c7c"></div>
<span class="t" style="left:1014.2px;top:448.0px;font-size:12.7px;letter-spacing:0.046px;color:#1a1a1a;-webkit-text-stroke:0.5px #1a1a1a;">InspectionResponse</span>
<div class="abs" style="left:1001px;top:471.4px;width:9px;height:0;border-top:1px dotted #7c7c7c"></div>
<span class="t" style="left:1014.2px;top:466.0px;font-size:12.7px;letter-spacing:-0.429px;color:#1a1a1a;-webkit-text-stroke:0.5px #1a1a1a;">Is Processed</span>
<div class="abs" style="left:1001px;top:489.4px;width:9px;height:0;border-top:1px dotted #7c7c7c"></div>
<span class="t" style="left:1014.2px;top:483.9px;font-size:12.7px;letter-spacing:-0.060px;color:#1a1a1a;-webkit-text-stroke:0.5px #1a1a1a;">Is Valid Response</span>
<div class="abs" style="left:1001px;top:507.4px;width:9px;height:0;border-top:1px dotted #7c7c7c"></div>
<span class="t" style="left:1014.2px;top:501.9px;font-size:12.7px;letter-spacing:0.490px;color:#1a1a1a;-webkit-text-stroke:0.5px #1a1a1a;">Modified On</span>
<div class="abs" style="left:1001px;top:525.3px;width:9px;height:0;border-top:1px dotted #7c7c7c"></div>
<span class="t" style="left:1014.2px;top:519.9px;font-size:12.7px;letter-spacing:-0.636px;color:#1a1a1a;-webkit-text-stroke:0.5px #1a1a1a;">Name</span>
<div class="abs" style="left:1001px;top:543.3px;width:9px;height:0;border-top:1px dotted #7c7c7c"></div>
<span class="t" style="left:1014.2px;top:537.8px;font-size:12.7px;letter-spacing:0.083px;color:#1a1a1a;-webkit-text-stroke:0.5px #1a1a1a;">Owner (Owner)</span>
<div class="abs" style="left:1001px;top:561.2px;width:9px;height:0;border-top:1px dotted #7c7c7c"></div>
<span class="t" style="left:1014.2px;top:555.8px;font-size:12.7px;letter-spacing:-0.048px;color:#1a1a1a;-webkit-text-stroke:0.5px #1a1a1a;">Record Created On</span>
<!-- window borders -->
<div class="abs" style="left:0;top:0;width:1px;height:563px;background:#2b579a"></div>
<div class="abs" style="left:1px;top:39px;width:2px;height:524px;background:#ececec"></div>
<div class="abs" style="left:1535px;top:0;width:1px;height:563px;background:#2b579a"></div>
<div class="abs" style="left:1534px;top:39px;width:1px;height:524px;background:#c2cbdc"></div>
</div>
</body>
</html>
